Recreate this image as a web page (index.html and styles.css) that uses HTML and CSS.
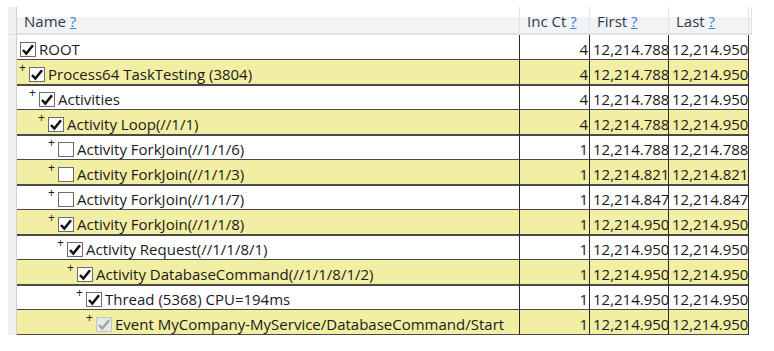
FILE: index.html
```html
<!DOCTYPE html>
<html>
<head>
  <title>Events</title>
  <link rel="stylesheet" href="styles.css">
</head>
<body>
  <div class="grid">
    <div class="hdr">
      <div class="gutter"></div>
      <div class="hcell">Name <a class="help">?</a></div>
      <div class="hcell">Inc Ct <a class="help">?</a></div>
      <div class="hcell">First <a class="help">?</a></div>
      <div class="hcell">Last <a class="help">?</a></div>
      <div class="hcell tail"></div>
    </div>

    <div class="row">
      <div class="gutter"></div>
      <div class="cell name l0"><span class="cb on"></span>ROOT</div>
      <div class="cell num">4</div>
      <div class="cell">12,214.788</div>
      <div class="cell">12,214.950</div>
    </div>
    <div class="row alt">
      <div class="gutter"></div>
      <div class="cell name l1"><span class="exp">+</span><span class="cb on"></span>Process64 TaskTesting (3804)</div>
      <div class="cell num">4</div>
      <div class="cell">12,214.788</div>
      <div class="cell">12,214.950</div>
    </div>
    <div class="row">
      <div class="gutter"></div>
      <div class="cell name l2"><span class="exp">+</span><span class="cb on"></span>Activities</div>
      <div class="cell num">4</div>
      <div class="cell">12,214.788</div>
      <div class="cell">12,214.950</div>
    </div>
    <div class="row alt">
      <div class="gutter"></div>
      <div class="cell name l3"><span class="exp">+</span><span class="cb on"></span>Activity Loop(//1/1)</div>
      <div class="cell num">4</div>
      <div class="cell">12,214.788</div>
      <div class="cell">12,214.950</div>
    </div>
    <div class="row">
      <div class="gutter"></div>
      <div class="cell name l4"><span class="exp">+</span><span class="cb"></span>Activity ForkJoin(//1/1/6)</div>
      <div class="cell num">1</div>
      <div class="cell">12,214.788</div>
      <div class="cell">12,214.788</div>
    </div>
    <div class="row alt">
      <div class="gutter"></div>
      <div class="cell name l4"><span class="exp">+</span><span class="cb"></span>Activity ForkJoin(//1/1/3)</div>
      <div class="cell num">1</div>
      <div class="cell">12,214.821</div>
      <div class="cell">12,214.821</div>
    </div>
    <div class="row">
      <div class="gutter"></div>
      <div class="cell name l4"><span class="exp">+</span><span class="cb"></span>Activity ForkJoin(//1/1/7)</div>
      <div class="cell num">1</div>
      <div class="cell">12,214.847</div>
      <div class="cell">12,214.847</div>
    </div>
    <div class="row alt">
      <div class="gutter"></div>
      <div class="cell name l4"><span class="exp">+</span><span class="cb on"></span>Activity ForkJoin(//1/1/8)</div>
      <div class="cell num">1</div>
      <div class="cell">12,214.950</div>
      <div class="cell">12,214.950</div>
    </div>
    <div class="row">
      <div class="gutter"></div>
      <div class="cell name l5"><span class="exp">+</span><span class="cb on"></span>Activity Request(//1/1/8/1)</div>
      <div class="cell num">1</div>
      <div class="cell">12,214.950</div>
      <div class="cell">12,214.950</div>
    </div>
    <div class="row alt">
      <div class="gutter"></div>
      <div class="cell name l6"><span class="exp">+</span><span class="cb on"></span>Activity DatabaseCommand(//1/1/8/1/2)</div>
      <div class="cell num">1</div>
      <div class="cell">12,214.950</div>
      <div class="cell">12,214.950</div>
    </div>
    <div class="row">
      <div class="gutter"></div>
      <div class="cell name l7"><span class="exp">+</span><span class="cb on"></span>Thread (5368) CPU=194ms</div>
      <div class="cell num">1</div>
      <div class="cell">12,214.950</div>
      <div class="cell">12,214.950</div>
    </div>
    <div class="row alt">
      <div class="gutter"></div>
      <div class="cell name l8"><span class="exp">+</span><span class="cb on off"></span>Event MyCompany-MyService/DatabaseCommand/Start</div>
      <div class="cell num">1</div>
      <div class="cell">12,214.950</div>
      <div class="cell">12,214.950</div>
    </div>
  </div>
</body>
</html>
```

FILE: styles.css
```css
body {
  margin: 0;
  padding: 7px 0 0 8px;
  background: #fff;
  font-family: 'Open Sans', 'Liberation Sans', sans-serif;
  font-size: 15px;
  color: #1a1a1a;
}
.grid {
  width: 745px;
}
.hdr {
  display: grid;
  grid-template-columns: 9px 503px 70px 79px 80px 3px;
  height: 28px;
}
.hdr .gutter {
  background: #f0f0f0;
}
.hcell {
  box-sizing: border-box;
  padding: 4px 0 0 7px;
  background: linear-gradient(#fff 0, #fff 10px, #f2f3f4 10px);
  border-right: 1px solid #e2e3e5;
  border-bottom: 2px solid #e0e1e3;
  color: #2e3a48;
  white-space: nowrap;
}
.hcell.tail {
  padding: 0;
}
.help {
  color: #3b7fd6;
  text-decoration: underline;
}
.row {
  display: grid;
  grid-template-columns: 9px 503px 70px 79px 80px;
  height: 25px;
}
.gutter {
  background: #f0f0f0;
  border-bottom: 1px solid #dedede;
  border-right: 1px solid #d0d0d0;
}
.cell {
  box-sizing: border-box;
  display: flex;
  align-items: center;
  padding: 4px 0 0 3px;
  border-right: 1px solid #2a2a2a;
  border-bottom: 2px solid #4a4a4a;
  white-space: nowrap;
}
.row.alt .cell {
  background: #f2eea3;
}
.num {
  justify-content: flex-end;
  padding-left: 0;
  padding-right: 1px;
}
.l0 { padding-left: 3px; }
.l1 { padding-left: 2px; }
.l2 { padding-left: 12px; }
.l3 { padding-left: 21px; }
.l4 { padding-left: 31px; }
.l5 { padding-left: 40px; }
.l6 { padding-left: 50px; }
.l7 { padding-left: 59px; }
.l8 { padding-left: 69px; }
.exp {
  align-self: flex-start;
  width: 10px;
  margin-top: -3px;
  font-size: 12px;
  line-height: 14px;
}
.cb {
  box-sizing: border-box;
  width: 16px;
  height: 15px;
  margin-right: 3px;
  border: 1px solid #6c6c6c;
  background: #fff;
  flex-shrink: 0;
}
.cb.on {
  background: #fff url("data:image/svg+xml,%3Csvg xmlns='http://www.w3.org/2000/svg' width='14' height='13'%3E%3Cpath d='M2 7 L5.3 10.5 L12 2.2' fill='none' stroke='%23111' stroke-width='2.5'/%3E%3C/svg%3E") no-repeat center;
}
.cb.off {
  border-color: #c4c4c4;
  background: #e8e8e8 url("data:image/svg+xml,%3Csvg xmlns='http://www.w3.org/2000/svg' width='14' height='13'%3E%3Cpath d='M2 7 L5.3 10.5 L12 2.2' fill='none' stroke='%23a0a0a0' stroke-width='2.2'/%3E%3C/svg%3E") no-repeat center;
}
```
